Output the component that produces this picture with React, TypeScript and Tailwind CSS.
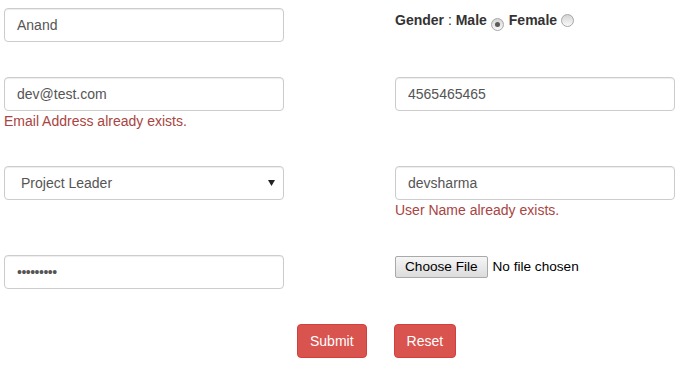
const inputCls =
  'block w-[280px] h-[34px] px-[12px] border border-[#ccc] rounded-[4px] bg-white text-[14px] text-[#555] shadow-[inset_0_1px_1px_rgba(0,0,0,0.075)] outline-none';

const Radio = ({ checked }: { checked?: boolean }) => (
  <span className="inline-flex items-center justify-center w-[13px] h-[13px] rounded-full border border-[#a6a6a6] bg-gradient-to-b from-[#d4d4d4] to-[#fafafa] align-[-2px] ml-[4px] mr-[5px]">
    {checked && <span className="w-[5px] h-[5px] rounded-full bg-[#5a5a5a]" />}
  </span>
);

const ErrorText = ({ children }: { children: string }) => (
  <p className="text-[14px] leading-[20px] text-[#a94442]">{children}</p>
);

export default function App() {
  return (
    <div
      className="w-[690px] h-[365px] bg-white pt-[8px] pl-[4px] text-[#333]"
      style={{ fontFamily: '"Liberation Sans", Arial, sans-serif' }}
    >
      <div className="grid grid-cols-[280px_280px] gap-x-[111px] gap-y-[35px]">
        {/* Row 1 */}
        <input className={inputCls} readOnly value="Anand" />
        <div className="pt-[2px] text-[14px] leading-[20px]">
          <span className="font-bold">Gender</span> : <span className="font-bold">Male</span>
          <Radio checked />
          <span className="font-bold">Female</span>
          <Radio />
        </div>

        {/* Row 2 */}
        <div>
          <input className={inputCls} readOnly value="dev@test.com" />
          <ErrorText>Email Address already exists.</ErrorText>
        </div>
        <input className={inputCls} readOnly value="4565465465" />

        {/* Row 3 */}
        <div className="relative w-[280px]">
          <select
            className={`${inputCls} appearance-none pl-[16px]`}
            defaultValue="Project Leader"
          >
            <option>Project Leader</option>
            <option>Developer</option>
          </select>
          <svg
            className="absolute right-[9px] top-[14px] pointer-events-none"
            width="7"
            height="6"
            viewBox="0 0 7 6"
          >
            <path d="M0 0h7L3.5 6z" fill="#222" />
          </svg>
        </div>
        <div>
          <input className={inputCls} readOnly value="devsharma" />
          <ErrorText>User Name already exists.</ErrorText>
        </div>

        {/* Row 4 */}
        <input
          className={`${inputCls} tracking-[-0.5px]`}
          type="password"
          readOnly
          value="123456789"
        />
        <div className="flex items-center h-[22px] mt-px text-[13.6px] text-black">
          <button className="h-[22px] px-[9px] border border-[#a9a9a9] rounded-[2px] bg-gradient-to-b from-[#f6f6f6] to-[#dcdcdc] text-black">
            Choose File
          </button>
          <span className="ml-[5px]">No file chosen</span>
        </div>
      </div>

      <div className="flex gap-[27px] mt-[35px] ml-[293px]">
        <button className="h-[34px] px-[12px] rounded-[4px] border border-[#d43f3a] bg-[#d9534f] text-white text-[14px]">
          Submit
        </button>
        <button className="h-[34px] px-[12px] rounded-[4px] border border-[#d43f3a] bg-[#d9534f] text-white text-[14px]">
          Reset
        </button>
      </div>
    </div>
  );
}
